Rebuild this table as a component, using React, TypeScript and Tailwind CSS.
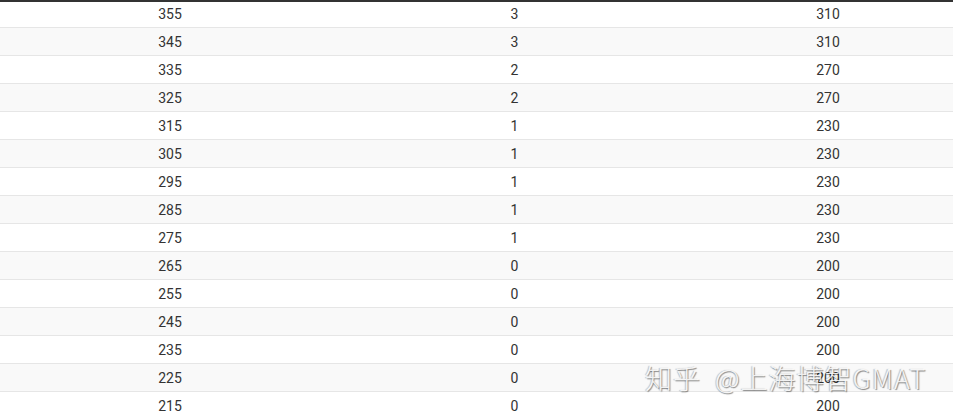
const rows: [number, number, number][] = [
  [355, 3, 310],
  [345, 3, 310],
  [335, 2, 270],
  [325, 2, 270],
  [315, 1, 230],
  [305, 1, 230],
  [295, 1, 230],
  [285, 1, 230],
  [275, 1, 230],
  [265, 0, 200],
  [255, 0, 200],
  [245, 0, 200],
  [235, 0, 200],
  [225, 0, 200],
  [215, 0, 200],
];

export default function App() {
  return (
    <div className="relative h-[418px] w-[953px] overflow-hidden bg-white font-['Roboto','Liberation_Sans',sans-serif] text-[14px] text-[#333]">
      <div className="absolute inset-x-0 top-0 h-[2px] bg-[#333]" />
      <div>
        {rows.map((r, i) => (
          <div
            key={r[0]}
            className={
              "grid h-[28px] grid-cols-[340px_349px_278px] items-center border-b border-[#e6e6e6] " +
              (i % 2 === 1 ? "bg-[#f9f9f9]" : "bg-white")
            }
          >
            {r.map((v, j) => (
              <div key={j} className="pt-[1px] text-center leading-[26px]">
                {v}
              </div>
            ))}
          </div>
        ))}
      </div>
      {/* watermark */}
      <div className="absolute left-[645px] top-[361px] whitespace-nowrap font-['Noto_Sans_CJK_SC',sans-serif] text-[27px] font-light leading-[34px] tracking-[1px] text-white/85 [text-shadow:1px_1px_1px_rgba(0,0,0,0.45),-1px_0_1px_rgba(0,0,0,0.25)]">
        知乎<span className="inline-block w-[14px]" />@上海博智GMAT
      </div>
    </div>
  );
}
